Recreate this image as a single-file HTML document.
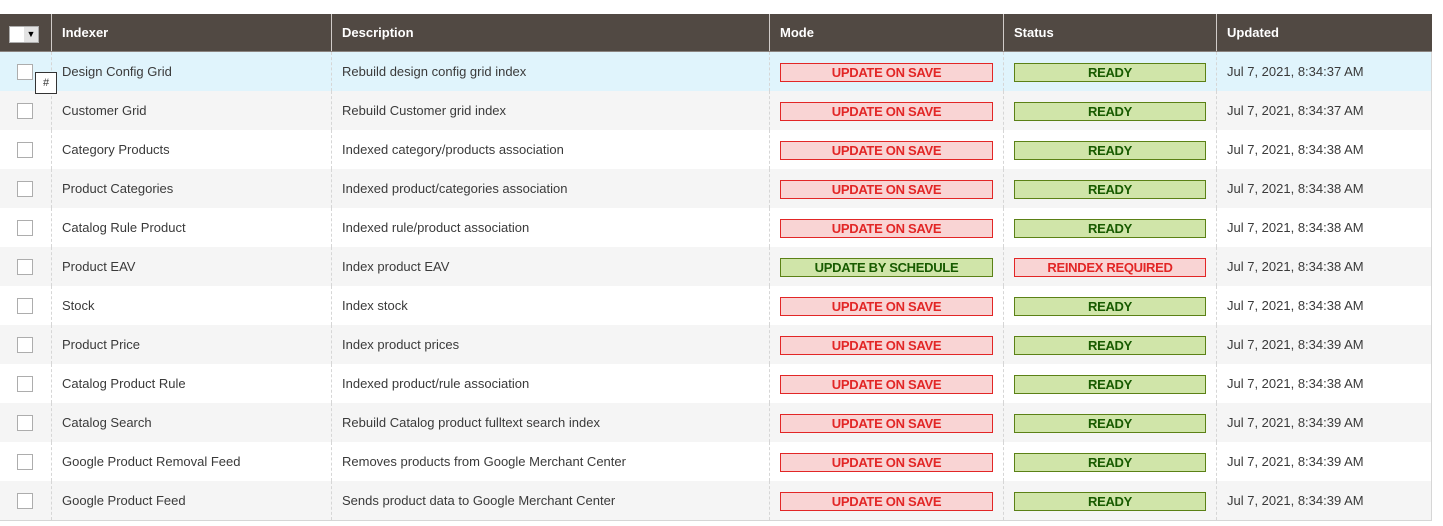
<!DOCTYPE html>
<html><head><style>
body{margin:0;background:#fff;font-family:"Liberation Sans",sans-serif;width:1443px;height:526px;overflow:hidden;position:relative}
.h{position:absolute;top:14px;left:0;width:1432px;height:38px;background:#514943;border-bottom:1px solid #8a837f;box-sizing:border-box}
.hc{position:absolute;top:0;height:37px;line-height:37px;color:#fff;font-weight:bold;font-size:13px;padding-left:10px;box-sizing:border-box;border-left:1px solid #d0cbc8}
.r{position:absolute;left:0;width:1432px;height:39px;font-size:13px;color:#3a3a3a;border-right:1px solid #d6d6d6;box-sizing:border-box}
.c{position:absolute;top:0;height:39px;line-height:39px;padding-left:10px;box-sizing:border-box;border-left:1px dashed #d6d6d6;white-space:nowrap}
.cb{position:absolute;left:17px;top:12px;width:14px;height:14px;border:1px solid #adadad;background:#fff}
.b{position:absolute;top:11px;height:19px;line-height:17px;box-sizing:border-box;text-align:center;font-weight:bold;font-size:13px;letter-spacing:-0.3px}
.red{background:#f9d4d4;border:1px solid #e22626;color:#e22626}
.grn{background:#d0e5a9;border:1px solid #5b8116;color:#185b00}
</style></head><body>
<div class="h">
<div style="position:absolute;left:9px;top:12px;width:30px;height:17px;background:#fff;border:1px solid #adadad;box-sizing:border-box"><div style="position:absolute;right:0;top:0;width:14px;height:15px;background:#e3e3e3;font-size:9px;line-height:15px;text-align:center;color:#000">▼</div></div>
<div class="hc" style="left:51px;width:280px">Indexer</div>
<div class="hc" style="left:331px;width:438px">Description</div>
<div class="hc" style="left:769px;width:234px">Mode</div>
<div class="hc" style="left:1003px;width:213px">Status</div>
<div class="hc" style="left:1216px;width:216px">Updated</div>
</div>
<div id="rows"></div>
<div style="position:absolute;left:0;top:520px;width:1432px;height:1px;background:#d6d6d6"></div>
<div style="position:absolute;left:35px;top:72px;width:22px;height:22px;border:1px solid #333;background:#fff;box-sizing:border-box;font-size:11px;text-align:center;line-height:20px;color:#333">#</div>
<script>
var d=[["Design Config Grid","Rebuild design config grid index",0,0,"Jul 7, 2021, 8:34:37 AM"],
["Customer Grid","Rebuild Customer grid index",0,0,"Jul 7, 2021, 8:34:37 AM"],
["Category Products","Indexed category/products association",0,0,"Jul 7, 2021, 8:34:38 AM"],
["Product Categories","Indexed product/categories association",0,0,"Jul 7, 2021, 8:34:38 AM"],
["Catalog Rule Product","Indexed rule/product association",0,0,"Jul 7, 2021, 8:34:38 AM"],
["Product EAV","Index product EAV",1,1,"Jul 7, 2021, 8:34:38 AM"],
["Stock","Index stock",0,0,"Jul 7, 2021, 8:34:38 AM"],
["Product Price","Index product prices",0,0,"Jul 7, 2021, 8:34:39 AM"],
["Catalog Product Rule","Indexed product/rule association",0,0,"Jul 7, 2021, 8:34:38 AM"],
["Catalog Search","Rebuild Catalog product fulltext search index",0,0,"Jul 7, 2021, 8:34:39 AM"],
["Google Product Removal Feed","Removes products from Google Merchant Center",0,0,"Jul 7, 2021, 8:34:39 AM"],
["Google Product Feed","Sends product data to Google Merchant Center",0,0,"Jul 7, 2021, 8:34:39 AM"]];
var h="";
d.forEach(function(r,i){
var bg=i==0?"#e0f4fc":(i%2?"#f5f5f5":"#fff");
h+='<div class="r" style="top:'+(52+i*39)+'px;background:'+bg+'"><div class="cb"></div>'+
'<div class="c" style="left:51px;width:280px">'+r[0]+'</div>'+
'<div class="c" style="left:331px;width:438px">'+r[1]+'</div>'+
'<div class="c" style="left:769px;width:234px"></div>'+
'<div class="b '+(r[2]?'grn':'red')+'" style="left:780px;width:213px">'+(r[2]?'UPDATE BY SCHEDULE':'UPDATE ON SAVE')+'</div>'+
'<div class="c" style="left:1003px;width:213px"></div>'+
'<div class="b '+(r[3]?'red':'grn')+'" style="left:1014px;width:192px">'+(r[3]?'REINDEX REQUIRED':'READY')+'</div>'+
'<div class="c" style="left:1216px;width:216px">'+r[4]+'</div></div>';});
document.getElementById("rows").innerHTML=h;
</script>
</body></html>
